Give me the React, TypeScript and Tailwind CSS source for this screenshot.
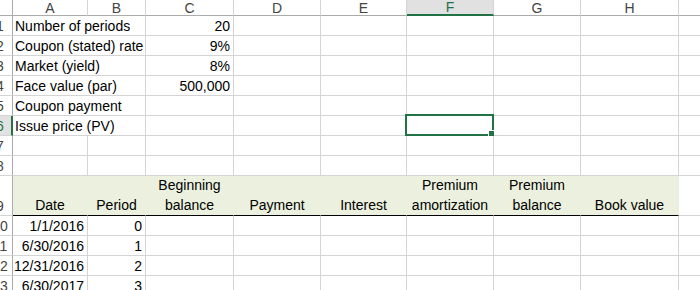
import clsx from "clsx"

const cols = ["A", "B", "C", "D", "E", "F", "G", "H", "I"]

const top = [
  { n: 1, a: "Number of periods", c: "20" },
  { n: 2, a: "Coupon (stated) rate", c: "9%" },
  { n: 3, a: "Market (yield)", c: "8%" },
  { n: 4, a: "Face value (par)", c: "500,000" },
  { n: 5, a: "Coupon payment", c: "" },
  { n: 6, a: "Issue price (PV)", c: "" },
]

const heads = [
  ["Date"],
  ["Period"],
  ["Beginning", "balance"],
  ["Payment"],
  ["Interest"],
  ["Premium", "amortization"],
  ["Premium", "balance"],
  ["Book value"],
]

const schedule = [
  { n: 10, date: "1/1/2016", period: "0" },
  { n: 11, date: "6/30/2016", period: "1" },
  { n: 12, date: "12/31/2016", period: "2" },
  { n: 13, date: "6/30/2017", period: "3" },
]

function RowHead({ n, active }: { n: number; active?: boolean }) {
  return (
    <div
      className={clsx(
        "flex items-end overflow-hidden border-b border-[#d4d4d4] leading-[18px] text-[14px]",
        active ? "bg-[#e1e1e1] border-r-2 border-r-[#217346] text-[#217346]" : "border-r border-r-[#ababab] text-[#444]"
      )}
    >
      <div className="-ml-[13px] w-[26px] shrink-0 text-center">{n}</div>
    </div>
  )
}

function Cell({ children, right, span, className }: { children?: React.ReactNode; right?: boolean; span?: boolean; className?: string }) {
  return (
    <div
      className={clsx(
        "relative flex items-end whitespace-nowrap border-r border-b border-[#d4d4d4] leading-[18px]",
        right ? "justify-end pr-[3px]" : "pl-[2px]",
        span && "col-span-2",
        className
      )}
    >
      {children}
    </div>
  )
}

function Blank({ n }: { n: number }) {
  return (
    <>
      {Array.from({ length: n }).map((_, i) => (
        <Cell key={i} />
      ))}
    </>
  )
}

export default function App() {
  return (
    <div className="h-[290px] w-[700px] overflow-hidden bg-white text-[14px] text-black font-['Liberation_Sans',Arial,sans-serif]">
      <div className="grid w-max grid-cols-[13px_75px_58px_88px_87px_86px_87px_87px_98px_64px] grid-rows-[16px_repeat(8,20px)_40px_repeat(4,20px)]">
        {/* column letters */}
        <div className="border-r border-b border-r-[#ababab] border-b-[#ababab]" />
        {cols.map((c) => (
          <div
            key={c}
            className={clsx(
              "flex items-center justify-center border-r border-[#d4d4d4] leading-none",
              c === "F" ? "bg-[#e1e1e1] border-b-2 border-b-[#217346] text-[#217346]" : "border-b border-b-[#ababab] text-[#444]"
            )}
          >
            {c}
          </div>
        ))}

        {top.map((r) => (
          <div key={r.n} className="contents">
            <RowHead n={r.n} active={r.n === 6} />
            <Cell span>{r.a}</Cell>
            <Cell right>{r.c}</Cell>
            <Blank n={2} />
            <Cell>
              {r.n === 6 && (
                <div className="absolute -top-[2px] -left-[2px] -right-[1px] -bottom-[1px] border-2 border-[#217346]">
                  <div className="absolute -right-[3px] -bottom-[3px] h-[7px] w-[7px] border border-white bg-[#217346]" />
                </div>
              )}
            </Cell>
            <Blank n={3} />
          </div>
        ))}

        {[7, 8].map((n) => (
          <div key={n} className="contents">
            <RowHead n={n} />
            <Blank n={9} />
          </div>
        ))}

        {/* schedule header */}
        <RowHead n={9} />
        {heads.map((h, i) => (
          <div
            key={i}
            className="flex items-end justify-center border-r border-b border-r-[#ebf1de] border-b-black bg-[#ebf1de] text-center leading-[20px]"
          >
            <span>
              {h.map((line, j) => (
                <span key={j} className="block">
                  {line}
                </span>
              ))}
            </span>
          </div>
        ))}
        <Cell />

        {schedule.map((r) => (
          <div key={r.n} className="contents">
            <RowHead n={r.n} />
            <Cell right>{r.date}</Cell>
            <Cell right>{r.period}</Cell>
            <Blank n={7} />
          </div>
        ))}
      </div>
    </div>
  )
}
